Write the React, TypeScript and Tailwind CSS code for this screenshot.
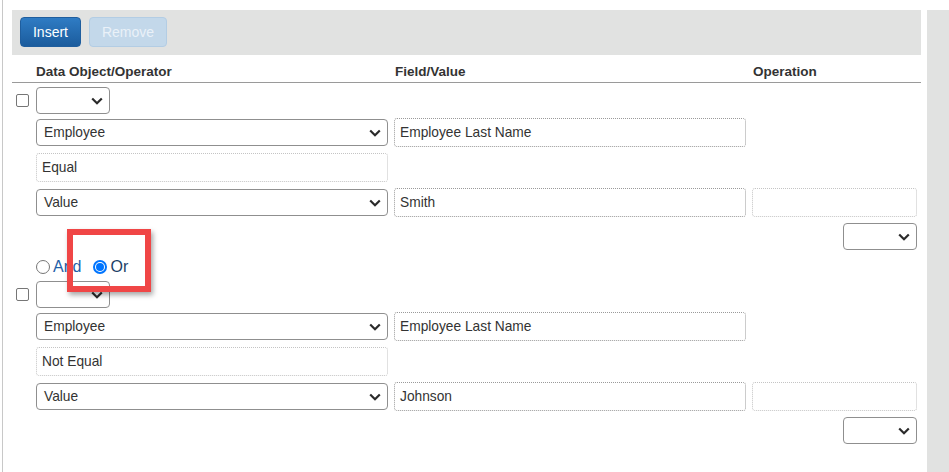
import type { ReactNode } from "react";

const COLS = "grid grid-cols-[18px_352px_352px_165px] gap-x-[6px]";

function Chevron() {
  return (
    <svg width="12" height="8" viewBox="0 0 12 8" aria-hidden>
      <path d="M1.2 1.5 L6 6.2 L10.8 1.5" fill="none" stroke="#2b2b2b" strokeWidth="2.2" />
    </svg>
  );
}

function Select({ label = "", className = "" }: { label?: string; className?: string }) {
  return (
    <div
      className={`flex h-[27px] items-center justify-between rounded-[4px] border border-[#8f8f8f] bg-white pl-[7px] pr-[6px] text-[#333] ${className}`}
    >
      <span className="pt-[1px]">{label}</span>
      <Chevron />
    </div>
  );
}

function Field({ value = "", light = false, className = "" }: { value?: string; light?: boolean; className?: string }) {
  return (
    <div
      className={`flex h-[29px] items-center rounded-[3px] border border-dotted px-[5px] pt-[1px] text-[#333] ${
        light ? "border-[#c4c4c4]" : "border-[#9a9a9a]"
      } ${className}`}
    >
      {value}
    </div>
  );
}

function Line({ children, className = "" }: { children: ReactNode; className?: string }) {
  return <div className={`${COLS} items-center ${className}`}>{children}</div>;
}

function Condition({ op, value }: { op: string; value: string }) {
  return (
    <div className="flex flex-col">
      <Line className="h-[26px]">
        <div className="flex items-center pl-[4px]">
          <span className="h-[13px] w-[13px] rounded-[2px] border border-[#767676] bg-white" />
        </div>
        <Select className="h-[26px] w-[74px]" />
      </Line>
      <Line className="mt-[5px] h-[29px]">
        <div />
        <Select label="Employee" />
        <Field value="Employee Last Name" />
      </Line>
      <Line className="mt-[6px] h-[29px]">
        <div />
        <Field value={op} light />
      </Line>
      <Line className="mt-[6px] h-[29px]">
        <div />
        <Select label="Value" />
        <Field value={value} />
        <Field light />
      </Line>
      <Line className="mt-[6px] h-[26px]">
        <div />
        <div />
        <div />
        <div className="flex justify-end">
          <Select className="h-[26px] w-[74px]" />
        </div>
      </Line>
    </div>
  );
}

function Radio({ checked, label }: { checked?: boolean; label: string }) {
  return (
    <label className="flex items-center">
      {checked ? (
        <span className="flex h-[14px] w-[14px] items-center justify-center rounded-full border-[2px] border-[#0075ff] bg-white">
          <span className="h-[8px] w-[8px] rounded-full bg-[#0075ff]" />
        </span>
      ) : (
        <span className="h-[14px] w-[14px] rounded-full border border-[#767676] bg-white" />
      )}
      <span className={`ml-[3px] text-[16px] ${checked ? "text-[#1d3f66]" : "text-[#1f5fa8]"}`}>{label}</span>
    </label>
  );
}

export default function App() {
  return (
    <div className="flex min-h-[472px] bg-white font-['Liberation_Sans',Arial,sans-serif] text-[13.75px]">
      <div className="relative ml-[2px] w-[919px] border-l border-[#c8c8c8] pl-[9px] pt-[10px]">
        <div className="flex h-[45px] items-start gap-[8px] bg-[#e1e2e1] pl-[8px] pt-[7px]">
          <button
            type="button"
            className="h-[30px] w-[61px] rounded-[4px] border border-[#1f5e9e] bg-gradient-to-b from-[#2f7cc4] to-[#1b5c9d] text-[14px] text-white"
          >
            Insert
          </button>
          <button
            type="button"
            className="h-[30px] w-[78px] rounded-[4px] border border-[#b3cde4] bg-[#c3d8ea] text-[14px] text-[#eaf1f8]"
          >
            Remove
          </button>
        </div>

        <div className={`${COLS} h-[28px] border-b border-[#9a9a9a] pt-[9px] text-[13.5px] font-bold leading-[16px] text-[#333]`}>
          <div />
          <div>Data Object/Operator</div>
          <div className="pl-[1px]">Field/Value</div>
          <div className="pl-[1px]">Operation</div>
        </div>

        <div className="mt-[4px]">
          <Condition op="Equal" value="Smith" />
          <div className="flex h-[32px] items-center gap-[12px] pl-[24px] pt-[4px]">
            <Radio label="And" />
            <Radio checked label="Or" />
          </div>
          <Condition op="Not Equal" value="Johnson" />
        </div>

        <div className="absolute left-[64px] top-[229px] h-[63px] w-[84px] border-[6px] border-[#f04646] shadow-[2px_3px_5px_rgba(0,0,0,0.35)]" />
      </div>
      <div className="ml-[6px] mt-[10px] w-[22px] bg-[#e1e2e1]" />
    </div>
  );
}
